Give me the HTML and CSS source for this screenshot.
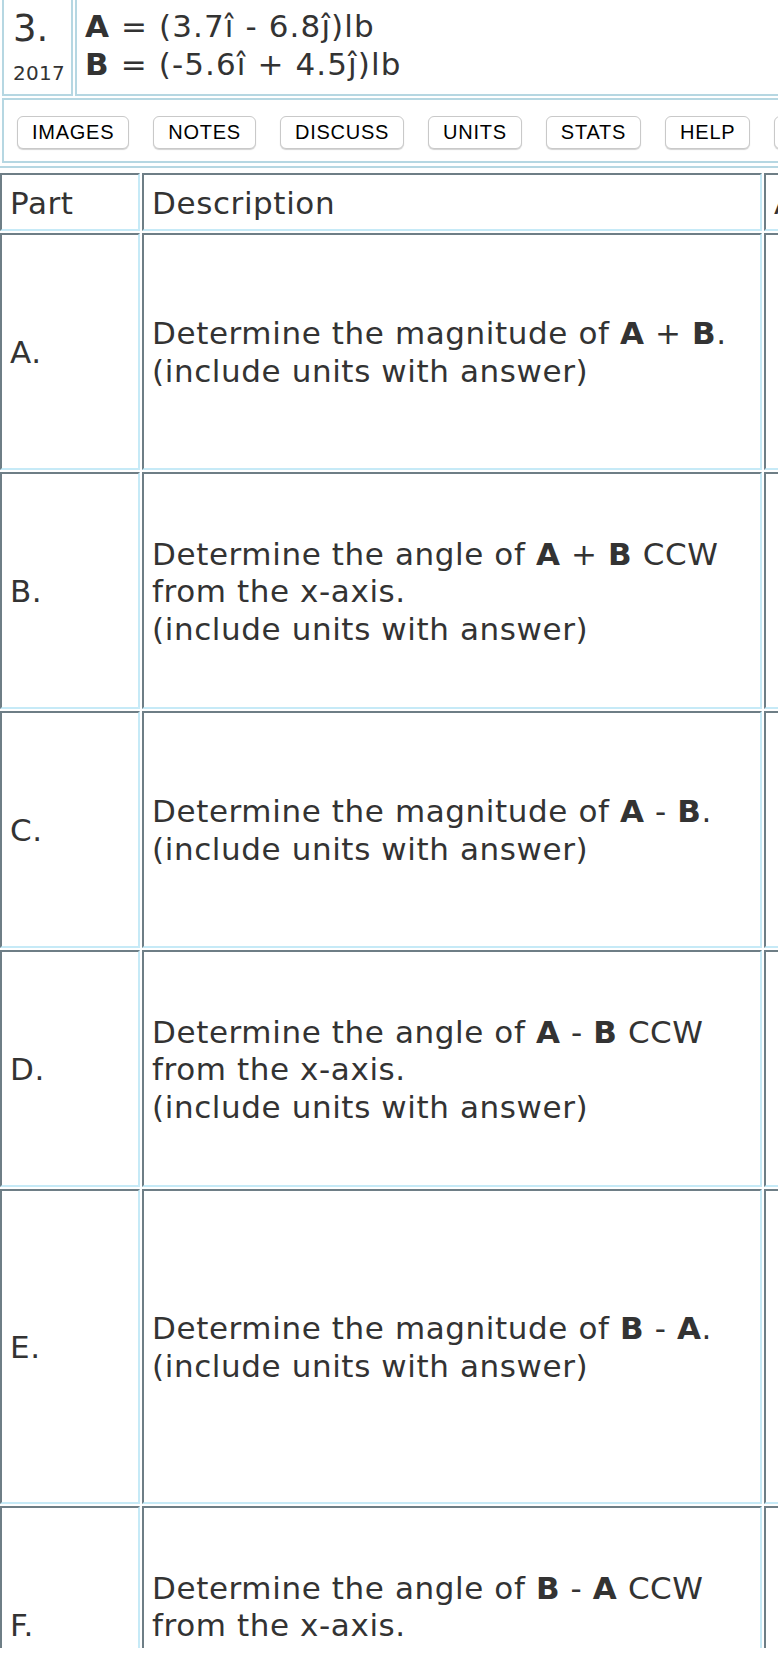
FILE: index.html
```html
<!DOCTYPE html>
<html>
<head>
<meta charset="utf-8">
<title>Problem 3</title>
<link rel="stylesheet" href="styles.css">
</head>
<body>
<div class="page">
  <div class="head">
    <div class="num">
      <div class="qn">3.</div>
      <div class="yr">2017</div>
    </div>
    <div class="vec">
      <div class="vline"><b>A</b> = (3.7î - 6.8ĵ)lb</div>
      <div class="vline"><b>B</b> = (-5.6î + 4.5ĵ)lb</div>
    </div>
  </div>
  <div class="toolbar">
    <button class="btn">IMAGES</button>
    <button class="btn">NOTES</button>
    <button class="btn">DISCUSS</button>
    <button class="btn">UNITS</button>
    <button class="btn">STATS</button>
    <button class="btn">HELP</button>
    <button class="btn">PRINT</button>
  </div>
  <div class="sep"></div>
  <table class="parts">
    <tr class="hrow">
      <td class="part">Part</td>
      <td class="desc">Description</td>
      <td class="ans">Answer</td>
    </tr>
    <tr class="row">
      <td class="part">A.</td>
      <td class="desc">Determine the magnitude of <b>A</b> + <b>B</b>.<br>(include units with answer)</td>
      <td class="ans"></td>
    </tr>
    <tr class="row">
      <td class="part">B.</td>
      <td class="desc">Determine the angle of <b>A</b> + <b>B</b> CCW<br>from the x-axis.<br>(include units with answer)</td>
      <td class="ans"></td>
    </tr>
    <tr class="row">
      <td class="part">C.</td>
      <td class="desc">Determine the magnitude of <b>A</b> - <b>B</b>.<br>(include units with answer)</td>
      <td class="ans"></td>
    </tr>
    <tr class="row">
      <td class="part">D.</td>
      <td class="desc">Determine the angle of <b>A</b> - <b>B</b> CCW<br>from the x-axis.<br>(include units with answer)</td>
      <td class="ans"></td>
    </tr>
    <tr class="row tall">
      <td class="part">E.</td>
      <td class="desc">Determine the magnitude of <b>B</b> - <b>A</b>.<br>(include units with answer)</td>
      <td class="ans"></td>
    </tr>
    <tr class="row">
      <td class="part">F.</td>
      <td class="desc">Determine the angle of <b>B</b> - <b>A</b> CCW<br>from the x-axis.<br>(include units with answer)</td>
      <td class="ans"></td>
    </tr>
  </table>
</div>
</body>
</html>
```
FILE: styles.css
```css
html, body {
  margin: 0;
  padding: 0;
  background: #ffffff;
  overflow: hidden;
}

.page {
  width: 1100px;
  height: 1648px;
  overflow: hidden;
  font-family: "DejaVu Sans", Verdana, sans-serif;
  color: #333333;
}

/* ---------- header ---------- */
.head {
  display: flex;
  height: 96px;
  margin-left: 2px;
}

.num {
  box-sizing: border-box;
  width: 71px;
  border-left: 2px solid #b6d7e2;
  border-right: 2px solid #b6d7e2;
  border-bottom: 2px solid #b6d7e2;
  padding: 9px 0 0 9px;
}

.qn {
  font-size: 37px;
  line-height: 40px;
}

.yr {
  font-size: 20px;
  line-height: 24px;
  margin-top: 12px;
  letter-spacing: 0.3px;
}

.vec {
  flex: 1;
  margin-left: 2px;
  border-left: 2px solid #b6d7e2;
  border-bottom: 2px solid #b6d7e2;
  padding: 7px 0 0 8px;
  font-size: 31px;
  line-height: 38px;
  letter-spacing: 1.1px;
}

.vline {
  white-space: nowrap;
}

/* ---------- toolbar ---------- */
.toolbar {
  display: flex;
  align-items: center;
  gap: 24px;
  height: 57px;
  margin: 2px 0 0 2px;
  border: 2px solid #b6d7e2;
  border-right: none;
  padding: 4px 0 0 13px;
}

.btn {
  box-sizing: border-box;
  height: 33px;
  padding: 0 14px;
  border: 1px solid #c9c9c9;
  border-radius: 6px;
  background: #ffffff;
  box-shadow: 0 1px 1px rgba(0, 0, 0, 0.18);
  font-family: "Liberation Sans", Arial, sans-serif;
  font-size: 20px;
  letter-spacing: 0.75px;
  color: #000000;
  white-space: nowrap;
}

.sep {
  margin-top: 3px;
  height: 3px;
  border-top: 2px solid #b6d7e2;
}

/* ---------- parts table ---------- */
.parts {
  border-collapse: separate;
  border-spacing: 2px;
  margin-left: -2px;
  font-size: 31px;
  line-height: 1.215;
  letter-spacing: 0.6px;
  color: #333333;
}

.parts td {
  box-sizing: border-box;
  vertical-align: middle;
  border-top: 2px solid #6e7e86;
  border-left: 2px solid #6e7e86;
  border-bottom: 2px solid #c6eaf7;
  border-right: 2px solid #c6eaf7;
  padding: 3px 8px 0 8px;
  white-space: nowrap;
}

.parts .part { width: 140px; }
.parts .desc { width: 620px; }
.parts .ans { width: 300px; }

.hrow td { height: 58px; }
.row td { height: 237px; }
.row.tall td { height: 315px; }
```
